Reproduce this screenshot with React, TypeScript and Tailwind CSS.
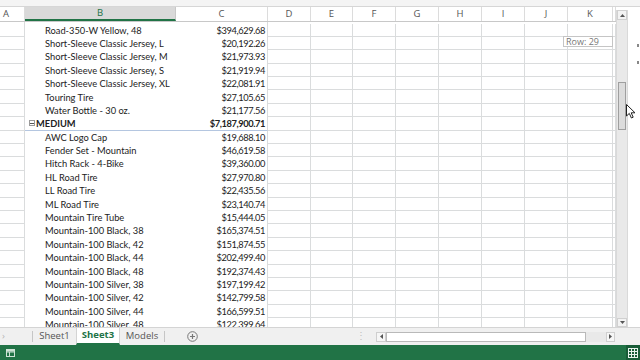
import React from "react";

interface PivotRow {
  name: string;
  value: string;
  group?: boolean;
}

const rows: PivotRow[] = [
  { name: "Road-350-W Yellow, 48", value: "$394,629.68" },
  { name: "Short-Sleeve Classic Jersey, L", value: "$20,192.26" },
  { name: "Short-Sleeve Classic Jersey, M", value: "$21,973.93" },
  { name: "Short-Sleeve Classic Jersey, S", value: "$21,919.94" },
  { name: "Short-Sleeve Classic Jersey, XL", value: "$22,081.91" },
  { name: "Touring Tire", value: "$27,105.65" },
  { name: "Water Bottle - 30 oz.", value: "$21,177.56" },
  { name: "MEDIUM", value: "$7,187,900.71", group: true },
  { name: "AWC Logo Cap", value: "$19,688.10" },
  { name: "Fender Set - Mountain", value: "$46,619.58" },
  { name: "Hitch Rack - 4-Bike", value: "$39,360.00" },
  { name: "HL Road Tire", value: "$27,970.80" },
  { name: "LL Road Tire", value: "$22,435.56" },
  { name: "ML Road Tire", value: "$23,140.74" },
  { name: "Mountain Tire Tube", value: "$15,444.05" },
  { name: "Mountain-100 Black, 38", value: "$165,374.51" },
  { name: "Mountain-100 Black, 42", value: "$151,874.55" },
  { name: "Mountain-100 Black, 44", value: "$202,499.40" },
  { name: "Mountain-100 Black, 48", value: "$192,374.43" },
  { name: "Mountain-100 Silver, 38", value: "$197,199.42" },
  { name: "Mountain-100 Silver, 42", value: "$142,799.58" },
  { name: "Mountain-100 Silver, 44", value: "$166,599.51" },
  { name: "Mountain-100 Silver, 48", value: "$122,399.64" },
];

// right-hand empty columns, D to K plus a sliver of L
const cols = [
  { label: "D", w: "w-[43px]" },
  { label: "E", w: "w-[42px]" },
  { label: "F", w: "w-[43px]" },
  { label: "G", w: "w-[43px]" },
  { label: "H", w: "w-[43px]" },
  { label: "I", w: "w-[43px]" },
  { label: "J", w: "w-[43px]" },
  { label: "K", w: "w-[45px]" },
  { label: "", w: "w-[3px]" },
];

function ColumnHeaders() {
  return (
    <div
      className="flex h-[15px] shrink-0 border-b border-[#c8c8c8] text-[9.5px] text-[#555] bg-white"
      style={{ fontFamily: '"Open Sans", "Noto Sans", sans-serif' }}
    >
      <div className="w-[25px] shrink-0 flex items-center pl-[3px] border-r border-[#dcdcdc]">
        A
      </div>
      <div className="w-[151px] shrink-0 flex items-center justify-center bg-[#d9d9d9] text-[#217346] border-b-2 border-[#217346] border-r border-r-[#c8c8c8]">
        B
      </div>
      <div className="w-[92px] shrink-0 flex items-center justify-center border-r border-[#dcdcdc]">
        C
      </div>
      {cols.map((c, i) => (
        <div
          key={i}
          className={`${c.w} shrink-0 flex items-center justify-center border-r border-[#dcdcdc]`}
        >
          {c.label}
        </div>
      ))}
    </div>
  );
}

function Row({ row }: { row: PivotRow }) {
  return (
    <div className="flex h-[13.4px] shrink-0">
      <div className="w-[25px] shrink-0 border-r border-b border-[#dadcdd]" />
      <div
        className={`w-[243px] shrink-0 flex items-center bg-white border-r border-[#dadcdd] ${
          row.group ? "border-b border-b-[#b4c6e0] font-bold" : ""
        }`}
      >
        {row.group ? (
          <div className="flex items-center pl-[4px]">
            <span className="w-[6px] h-[6px] border border-[#9a9a9a] flex items-center justify-center mr-[1px]">
              <span className="w-[4px] h-px bg-[#555]" />
            </span>
            <span>{row.name}</span>
          </div>
        ) : (
          <span className="pl-[20px] whitespace-nowrap">{row.name}</span>
        )}
        <span className="ml-auto pr-[2px] whitespace-nowrap tracking-[-0.4px]">{row.value}</span>
      </div>
      {cols.map((c, i) => (
        <div key={i} className={`${c.w} shrink-0 border-r border-b border-[#dadcdd]`} />
      ))}
    </div>
  );
}

function VerticalScrollbar() {
  return (
    <div className="w-[12px] shrink-0 flex flex-col bg-[#e9e9e9] border-x border-[#d9d9d9] mt-[3px]">
      <div className="h-[10px] flex items-center justify-center bg-[#f3f3f3] border border-[#d0d0d0]">
        <svg width="5" height="3" viewBox="0 0 5 3">
          <path d="M0 3 L2.5 0 L5 3 Z" fill="#555" />
        </svg>
      </div>
      <div className="h-[62px]" />
      <div className="h-[48px] mx-px bg-[#dcdcdc] border border-[#9f9f9f]" />
      <div className="flex-1" />
      <div className="h-[9px] flex items-center justify-center bg-[#f3f3f3] border border-[#d0d0d0]">
        <svg width="5" height="3" viewBox="0 0 5 3">
          <path d="M0 0 L2.5 3 L5 0 Z" fill="#555" />
        </svg>
      </div>
    </div>
  );
}

function SheetTabs() {
  return (
    <div
      className="h-[18px] shrink-0 flex items-stretch bg-[#f0f0f0] border-t border-[#d4d4d4] text-[9.5px] text-[#555]"
      style={{ fontFamily: '"Open Sans", "Noto Sans", sans-serif' }}
    >
      <div className="w-[33px] flex items-center pl-[2px] text-[#b5b5b5] border-r border-[#c6c6c6] my-[3px]">
        ›
      </div>
      <div className="w-[43px] flex items-center justify-center">Sheet1</div>
      <div className="w-[44px] flex items-center justify-center bg-white text-[#217346] font-bold border-b-2 border-[#217346] border-x border-x-[#d4d4d4]">
        Sheet3
      </div>
      <div className="w-[45px] flex items-center justify-center border-r border-[#c6c6c6] my-[3px]">
        Models
      </div>
      <div className="w-[38px] flex items-center justify-end pr-[5px]">
        <svg width="11" height="11" viewBox="0 0 11 11">
          <circle cx="5.5" cy="5.5" r="4.8" fill="none" stroke="#777" strokeWidth="1" />
          <path d="M5.5 3 V8 M3 5.5 H8" stroke="#777" strokeWidth="1.2" />
        </svg>
      </div>
      <div className="flex-1 flex items-center justify-end pr-[10px] text-[#c0c0c0]">⋮</div>
      <div className="w-[264px] flex items-center pr-[25px]">
        <div className="w-[10px] h-[10px] flex items-center justify-center border border-[#cfcfcf] bg-[#f6f6f6]">
          <svg width="3" height="5" viewBox="0 0 3 5">
            <path d="M3 0 L0 2.5 L3 5 Z" fill="#555" />
          </svg>
        </div>
        <div className="w-[200px] h-[10px] bg-white border border-[#b9b9b9]" />
        <div className="flex-1 h-[10px] bg-[#e9e9e9]" />
        <div className="w-[9px] h-[10px] flex items-center justify-center border border-[#cfcfcf] bg-[#f6f6f6]">
          <svg width="3" height="5" viewBox="0 0 3 5">
            <path d="M0 0 L3 2.5 L0 5 Z" fill="#555" />
          </svg>
        </div>
      </div>
    </div>
  );
}

function StatusBar() {
  return (
    <div className="h-[15px] shrink-0 flex items-center justify-between bg-[#217346]">
      <svg className="ml-[6px]" width="9" height="8" viewBox="0 0 9 8">
        <rect x="0.5" y="0.5" width="8" height="7" fill="none" stroke="#cfe3d6" />
        <path d="M0.5 3 H8.5 M3.5 3 V7.5" stroke="#cfe3d6" />
        <rect x="1" y="1" width="7" height="1.5" fill="#cfe3d6" />
      </svg>
      <div className="w-[14px] h-[15px] flex items-center justify-center bg-[#185c37]">
        <svg width="10" height="10" viewBox="0 0 10 10">
          <rect x="0.5" y="0.5" width="9" height="9" fill="none" stroke="#e8f2ec" />
          <path d="M3.5 0.5 V9.5 M6.5 0.5 V9.5 M0.5 3.5 H9.5 M0.5 6.5 H9.5" stroke="#e8f2ec" />
        </svg>
      </div>
    </div>
  );
}

export default function App() {
  return (
    <div
      className="w-[640px] h-[360px] overflow-hidden flex flex-col bg-white text-[#222]"
      style={{ fontFamily: 'Lato, "Open Sans", sans-serif' }}
    >
      <div className="h-[7px] shrink-0 bg-[#f4f4f4] border-b border-[#d6d6d6]" />

      <div className="h-[320px] shrink-0 flex relative">
        <div className="w-[616px] shrink-0 flex flex-col overflow-hidden">
          <ColumnHeaders />
          <div className="h-[1.5px] shrink-0 flex">
            <div className="w-[25px] shrink-0 border-r border-[#dadcdd]" />
            <div className="w-[243px] shrink-0 border-r border-[#dadcdd]" />
          </div>
          <div className="flex flex-col text-[9.3px] leading-none">
            {rows.map((r) => (
              <Row key={r.name} row={r} />
            ))}
          </div>
        </div>
        <VerticalScrollbar />
        <div className="flex-1 flex flex-col items-end pt-[37px] gap-[14px] pr-px">
          <span className="w-[2px] h-[3px] bg-[#888]" />
          <span className="w-[2px] h-[3px] bg-[#888]" />
        </div>

        {/* row tooltip while dragging the scrollbar */}
        <div
          className="absolute left-[563px] top-[29px] w-[50px] h-[11px] flex items-center pl-[2px] bg-white border border-[#c5c5c5] text-[9px] text-[#777]"
          style={{ fontFamily: '"Open Sans", "Noto Sans", sans-serif' }}
        >
          Row: 29
        </div>

        {/* mouse pointer */}
        <svg className="absolute left-[626px] top-[97px]" width="10" height="15" viewBox="0 0 10 15">
          <path d="M0.5 0.5 V12 L3.3 9.4 L5.4 14 L7.2 13.2 L5.2 8.8 L9 8.8 Z" fill="#fff" stroke="#222" strokeWidth="1" />
        </svg>
      </div>

      <SheetTabs />
      <StatusBar />
    </div>
  );
}
